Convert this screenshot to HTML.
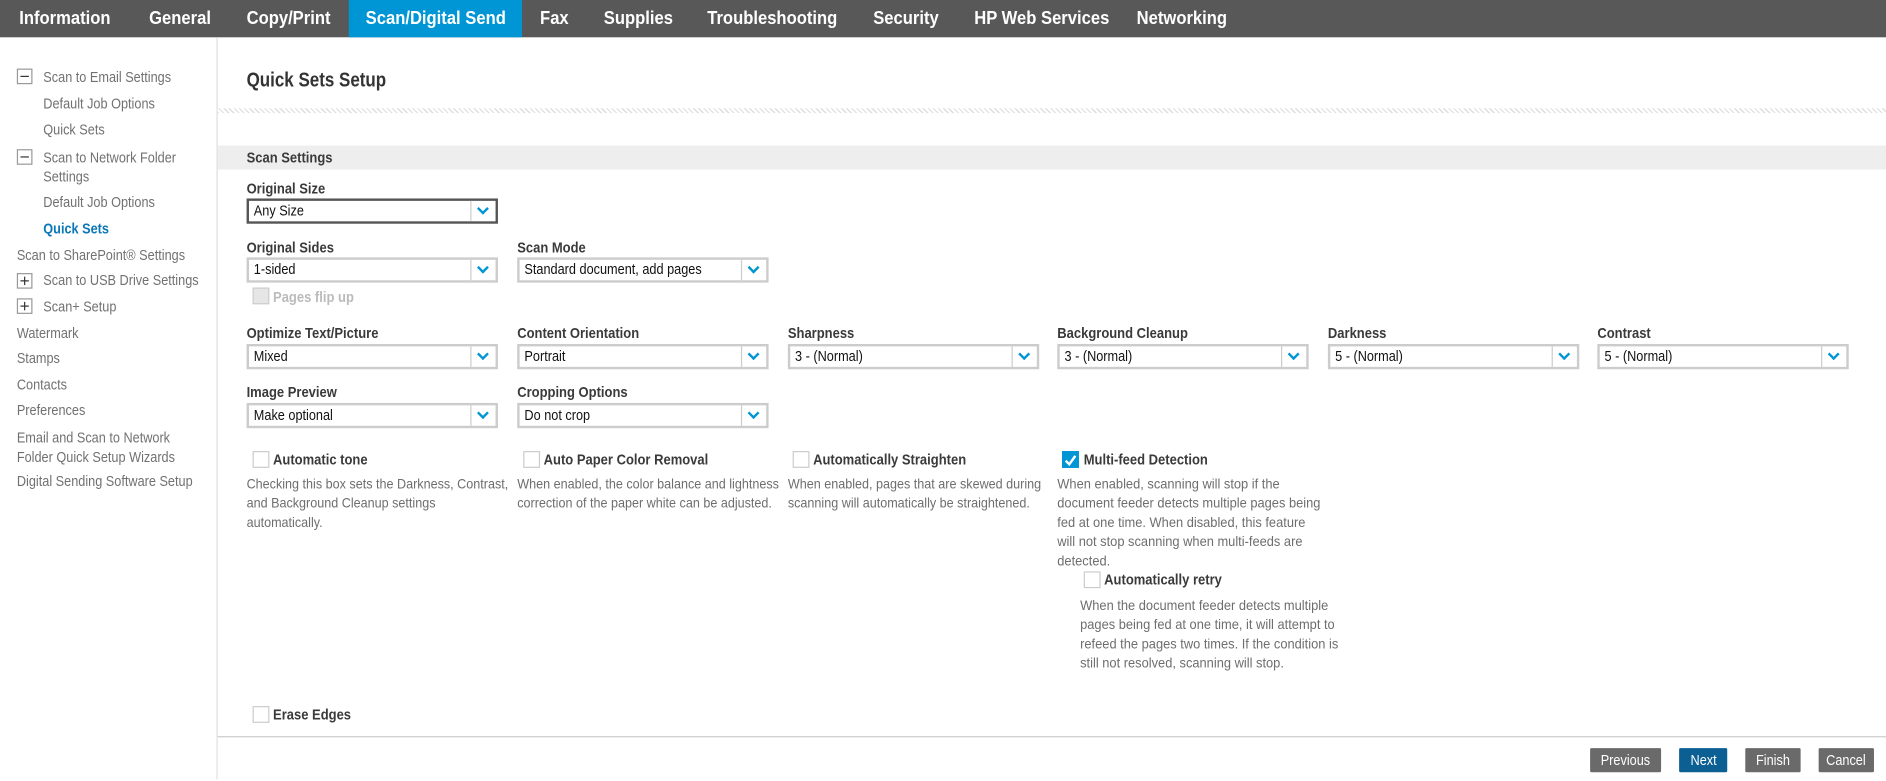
<!DOCTYPE html>
<html><head><meta charset="utf-8">
<style>
html,body{margin:0;padding:0;background:#fff;overflow:hidden;width:1886px;height:779px}
#s{position:absolute;left:0;top:0;width:1568px;height:648px;transform:scale(1.20281);transform-origin:0 0;font-family:"Liberation Sans Narrow","Liberation Sans",sans-serif}
.a{position:absolute;white-space:nowrap;transform-origin:0 0}
#nav{position:absolute;left:0;top:0;width:1568px;height:31px;background:#585858}
.t{position:absolute;top:0;height:31px;line-height:31px;color:#fff;font-weight:bold;font-size:15px;transform:scaleX(.92);transform-origin:0 0;white-space:nowrap}
.sb{font-size:12px;color:#717171;transform:scaleX(.88)}
.pm{position:absolute;width:11px;height:11px;border:1px solid #999;background:#fff}
.pm:before{content:"";position:absolute;left:2px;top:5px;width:7px;height:1px;background:#333}
.pl:after{content:"";position:absolute;left:5px;top:2px;width:1px;height:7px;background:#333}
.lb{font-size:12px;font-weight:bold;color:#3a3a3a;transform:scaleX(.9)}
.sel{position:absolute;width:205px;height:17px;border:2px solid #ccc;background:#fff;font-size:12px;color:#111;line-height:17px}
.sel span{position:absolute;left:4px;transform:scaleX(.88);transform-origin:0 0;white-space:nowrap}
.sel i{position:absolute;right:0;top:0;width:20px;height:17px;border-left:1px solid #ccc}
.sel i:after{content:"";position:absolute;left:6px;top:3px;width:5px;height:5px;border-right:2px solid #0096d6;border-bottom:2px solid #0096d6;transform:rotate(45deg)}
.cb{position:absolute;width:12px;height:12px;border:1px solid #ccc;background:#fff}
.d{font-size:11.5px;color:#6e6e6e;line-height:16px;transform:scaleX(.93)}
.btn{position:absolute;top:622px;height:20px;line-height:20px;color:#fff;font-size:12px;text-align:center;background:#6a6a6a;border-radius:1px}
.btn span{display:inline-block;transform:scaleX(.88)}
</style></head><body><div id="s">
<div id="nav">
<div style="position:absolute;left:290px;top:0;width:144px;height:31px;background:#0096d6"></div>
<div class="t" style="left:16px">Information</div>
<div class="t" style="left:124px">General</div>
<div class="t" style="left:205px">Copy/Print</div>
<div class="t" style="left:304px">Scan/Digital Send</div>
<div class="t" style="left:449px">Fax</div>
<div class="t" style="left:502px">Supplies</div>
<div class="t" style="left:588px">Troubleshooting</div>
<div class="t" style="left:726px">Security</div>
<div class="t" style="left:810px">HP Web Services</div>
<div class="t" style="left:945px">Networking</div>
</div>
<div class="a" style="left:180px;top:31px;width:1px;height:617px;background:#ddd"></div>
<div class="pm" style="left:14px;top:57px"></div><div class="a sb" style="left:36px;top:57px">Scan to Email Settings</div>
<div class="a sb" style="left:36px;top:79px">Default Job Options</div>
<div class="a sb" style="left:36px;top:101px">Quick Sets</div>
<div class="pm" style="left:14px;top:124px"></div><div class="a sb" style="left:36px;top:123px;line-height:16px">Scan to Network Folder<br>Settings</div>
<div class="a sb" style="left:36px;top:161px">Default Job Options</div>
<div class="a sb" style="left:36px;top:183px;color:#0a77b8;font-weight:bold">Quick Sets</div>
<div class="a sb" style="left:14px;top:205px">Scan to SharePoint® Settings</div>
<div class="pm pl" style="left:14px;top:227px"></div><div class="a sb" style="left:36px;top:226px">Scan to USB Drive Settings</div>
<div class="pm pl" style="left:14px;top:248px"></div><div class="a sb" style="left:36px;top:248px">Scan+ Setup</div>
<div class="a sb" style="left:14px;top:270px">Watermark</div>
<div class="a sb" style="left:14px;top:291px">Stamps</div>
<div class="a sb" style="left:14px;top:313px">Contacts</div>
<div class="a sb" style="left:14px;top:334px">Preferences</div>
<div class="a sb" style="left:14px;top:356px;line-height:16px">Email and Scan to Network<br>Folder Quick Setup Wizards</div>
<div class="a sb" style="left:14px;top:393px">Digital Sending Software Setup</div>

<div class="a" style="left:205px;top:57px;font-size:17px;font-weight:bold;color:#333;transform:scaleX(.83)">Quick Sets Setup</div>
<div class="a" style="left:181px;top:90px;width:1387px;height:4px;background:repeating-linear-gradient(45deg,#ddd 0 1px,#fff 1px 3px)"></div>
<div class="a" style="left:181px;top:121px;width:1387px;height:20px;background:#eee"></div>
<div class="a lb" style="left:205px;top:124px">Scan Settings</div>

<div class="a lb" style="left:205px;top:150px">Original Size</div>
<div class="sel" style="left:205px;top:165px;border-color:#555"><span>Any Size</span><i></i></div>
<div class="a lb" style="left:205px;top:199px">Original Sides</div>
<div class="sel" style="left:205px;top:214px"><span>1-sided</span><i></i></div>
<div class="a lb" style="left:430px;top:199px">Scan Mode</div>
<div class="sel" style="left:430px;top:214px"><span>Standard document, add pages</span><i></i></div>
<div class="cb" style="left:210px;top:239px;background:#e6e6e6"></div><div class="a lb" style="left:227px;top:240px;color:#bbb">Pages flip up</div>

<div class="a lb" style="left:205px;top:270px">Optimize Text/Picture</div>
<div class="sel" style="left:205px;top:286px"><span>Mixed</span><i></i></div>
<div class="a lb" style="left:430px;top:270px">Content Orientation</div>
<div class="sel" style="left:430px;top:286px"><span>Portrait</span><i></i></div>
<div class="a lb" style="left:655px;top:270px">Sharpness</div>
<div class="sel" style="left:655px;top:286px"><span>3 - (Normal)</span><i></i></div>
<div class="a lb" style="left:879px;top:270px">Background Cleanup</div>
<div class="sel" style="left:879px;top:286px"><span>3 - (Normal)</span><i></i></div>
<div class="a lb" style="left:1104px;top:270px">Darkness</div>
<div class="sel" style="left:1104px;top:286px"><span>5 - (Normal)</span><i></i></div>
<div class="a lb" style="left:1328px;top:270px">Contrast</div>
<div class="sel" style="left:1328px;top:286px"><span>5 - (Normal)</span><i></i></div>

<div class="a lb" style="left:205px;top:319px">Image Preview</div>
<div class="sel" style="left:205px;top:335px"><span>Make optional</span><i></i></div>
<div class="a lb" style="left:430px;top:319px">Cropping Options</div>
<div class="sel" style="left:430px;top:335px"><span>Do not crop</span><i></i></div>

<div class="cb" style="left:210px;top:375px"></div><div class="a lb" style="left:227px;top:375px">Automatic tone</div>
<div class="a d" style="left:205px;top:395px;transform:scaleX(.91)">Checking this box sets the Darkness, Contrast,<br>and Background Cleanup settings<br>automatically.</div>
<div class="cb" style="left:435px;top:375px"></div><div class="a lb" style="left:452px;top:375px">Auto Paper Color Removal</div>
<div class="a d" style="left:430px;top:395px;transform:scaleX(.91)">When enabled, the color balance and lightness<br>correction of the paper white can be adjusted.</div>
<div class="cb" style="left:659px;top:375px"></div><div class="a lb" style="left:676px;top:375px">Automatically Straighten</div>
<div class="a d" style="left:655px;top:395px;transform:scaleX(.91)">When enabled, pages that are skewed during<br>scanning will automatically be straightened.</div>
<div class="cb" style="left:883px;top:375px;background:#0096d6;border-color:#0096d6"><svg width="12" height="12" viewBox="0 0 12 12"><path d="M2 6 L5 9 L10 2" stroke="#fff" stroke-width="2" fill="none"/></svg></div>
<div class="a lb" style="left:901px;top:375px">Multi-feed Detection</div>
<div class="a d" style="left:879px;top:395px">When enabled, scanning will stop if the<br>document feeder detects multiple pages being<br>fed at one time. When disabled, this feature<br>will not stop scanning when multi-feeds are<br>detected.</div>
<div class="cb" style="left:901px;top:475px"></div><div class="a lb" style="left:918px;top:475px">Automatically retry</div>
<div class="a d" style="left:898px;top:496px">When the document feeder detects multiple<br>pages being fed at one time, it will attempt to<br>refeed the pages two times. If the condition is<br>still not resolved, scanning will stop.</div>

<div class="cb" style="left:210px;top:587px"></div><div class="a lb" style="left:227px;top:587px">Erase Edges</div>
<div class="a" style="left:181px;top:612px;width:1387px;height:36px;background:#fff;border-top:1px solid #ccc"></div>
<div class="btn" style="left:1322px;width:59px"><span>Previous</span></div>
<div class="btn" style="left:1396px;width:40px;background:#0b5f93"><span>Next</span></div>
<div class="btn" style="left:1451px;width:46px"><span>Finish</span></div>
<div class="btn" style="left:1512px;width:46px"><span>Cancel</span></div>
</div></body></html>
